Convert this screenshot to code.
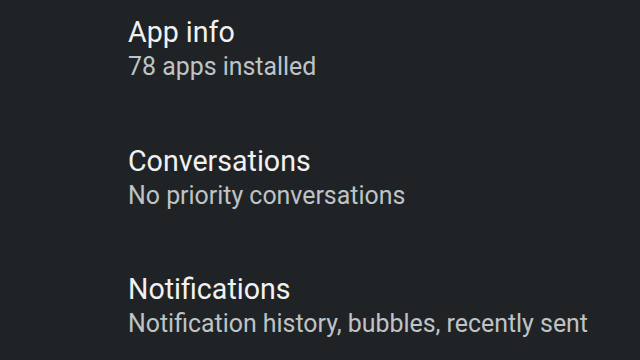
export default function App() {
  const items = [
    { title: "App info", sub: "78 apps installed" },
    { title: "Conversations", sub: "No priority conversations" },
    { title: "Notifications", sub: "Notification history, bubbles, recently sent" },
  ];

  return (
    <main className="h-[360px] w-[640px] overflow-hidden bg-[#202326] font-['Roboto',sans-serif]">
      {items.map((item) => (
        <div key={item.title} className="h-[128.5px] pl-[128px] pt-[14px]">
          <p className="text-[28.6px] leading-[36px] text-[#f1f1f1]">{item.title}</p>
          <p className="mt-[1px] text-[24.9px] leading-[32px] text-[#bfc3c6]">{item.sub}</p>
        </div>
      ))}
    </main>
  );
}
